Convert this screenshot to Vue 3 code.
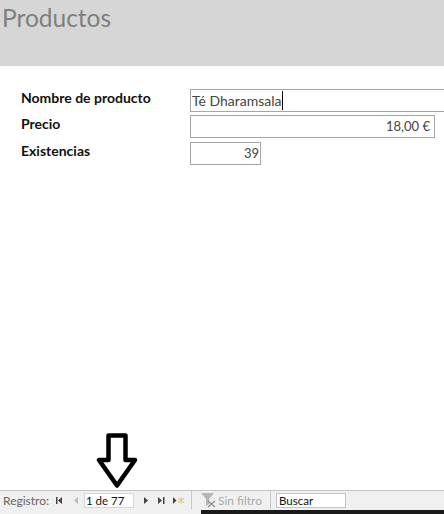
<script setup>
const fields = [
  { label: 'Nombre de producto', value: 'Té Dharamsala', kind: 'name' },
  { label: 'Precio', value: '18,00 €', kind: 'price' },
  { label: 'Existencias', value: '39', kind: 'stock' }
]
</script>

<template>
  <div class="page">
    <header class="head"><h1>Productos</h1></header>
    <main class="form">
      <div v-for="f in fields" :key="f.label" class="row" :class="f.kind">
        <span class="label">{{ f.label }}</span>
        <div class="field">
          <span>{{ f.value }}</span><i v-if="f.kind === 'name'" class="caret"></i>
        </div>
      </div>
    </main>
    <svg class="arrow" width="42" height="58" viewBox="0 0 42 58">
      <path d="M12.500 3.500H29.500V28H39L21 53.500L3 28H12.500Z" fill="#fff" stroke="#000" stroke-width="4.500" stroke-linejoin="round"/>
    </svg>
    <footer class="bar">
      <div class="nav">
        <span class="reg">Registro:</span>
        <svg class="ico first" width="7" height="7" viewBox="0 0 7 7"><path d="M0 0H1.500V7H0ZM6 0V7L2 3.500Z" fill="#444"/></svg>
        <svg class="ico prev" width="4" height="7" viewBox="0 0 4 7"><path d="M4 0V7L0 3.500Z" fill="#bbb"/></svg>
        <div class="current">1 de 77</div>
        <svg class="ico next" width="4" height="7" viewBox="0 0 4 7"><path d="M0 0V7L4 3.500Z" fill="#444"/></svg>
        <svg class="ico last" width="7" height="7" viewBox="0 0 7 7"><path d="M0 0V7L4 3.500ZM5 0H6.500V7H5Z" fill="#444"/></svg>
        <svg class="ico new" width="12" height="9" viewBox="0 0 12 9">
          <path d="M0 1V8L3.500 4.500Z" fill="#444"/>
          <path d="M8 1V8M5 2.500L11 6.500M11 2.500L5 6.500" stroke="#f3c58c" stroke-width="1.300"/>
        </svg>
      </div>
      <div class="filter">
        <svg width="17" height="16" viewBox="0 0 17 16">
          <path d="M1 1H14L9 7V12L6 14V7Z" fill="#b5b5b5"/>
          <path d="M8 9L15 15M15 9L8 15" stroke="#8d8d8d" stroke-width="1.300"/>
        </svg>
        <span>Sin filtro</span>
      </div>
      <div class="search"><div class="box">Buscar</div></div>
      <div class="strip"></div>
    </footer>
  </div>
</template>

<style scoped>
.page {
  position: relative;
  width: 444px;
  height: 514px;
  overflow: hidden;
  display: flex;
  flex-direction: column;
  background: #fff;
  font-family: Lato, "Open Sans", sans-serif;
}
.head {
  height: 66px;
  flex: none;
  background: #d6d6d6;
  padding: 3px 0 0 2px;
  box-sizing: border-box;
}
h1 {
  margin: 0;
  font-size: 24.500px;
  line-height: 30px;
  font-weight: 400;
  color: #7f7f7f;
}
.form {
  flex: 1;
  padding-top: 23px;
  display: flex;
  flex-direction: column;
}
.row {
  display: flex;
  padding-left: 21px;
  height: 23px;
  margin-bottom: 3px;
  font-size: 14px;
}
.label {
  width: 169px;
  flex: none;
  font-weight: 700;
  color: #111;
  line-height: 17px;
}
.field {
  box-sizing: border-box;
  height: 23px;
  border: 1px solid #a6a6a6;
  color: #444;
  font-size: 14px;
  line-height: 19px;
  display: flex;
  align-items: center;
  padding: 0 1px;
}
.name .field { width: 260px; flex: none; }
.price .field { width: 245px; justify-content: flex-end; padding-right: 4px; font-size: 13px; }
.stock { margin-top: 1px; }
.stock .field { width: 71px; justify-content: flex-end; font-size: 13px; }
.caret {
  width: 1px;
  height: 19px;
  background: #000;
}
.arrow {
  position: absolute;
  left: 96px;
  top: 432px;
}
.bar {
  position: relative;
  flex: none;
  box-sizing: border-box;
  height: 24px;
  padding-bottom: 5px;
  border-top: 1px solid #c4c4c4;
  background: #f0f0f0;
  display: flex;
  align-items: center;
  font-size: 12px;
  color: #666;
}
.nav {
  display: flex;
  align-items: center;
  width: 192px;
  padding-left: 3px;
  box-sizing: border-box;
  height: 100%;
  border-right: 1px solid #c8c8c8;
}
.reg { width: 52px; flex: none; }
.ico { flex: none; }
.first { margin-left: 1px; }
.prev { margin-left: 11px; }
.current {
  box-sizing: border-box;
  width: 50px;
  height: 15px;
  margin-left: 6px;
  border: 1px solid #d0d7df;
  background: #fff;
  color: #111;
  font-size: 11.500px;
  line-height: 13px;
  padding-left: 1px;
}
.next { margin-left: 10px; }
.last { margin-left: 10px; }
.new { margin-left: 8px; }
.filter {
  display: flex;
  align-items: center;
  width: 79px;
  box-sizing: border-box;
  padding-left: 8px;
  gap: 1px;
  height: 100%;
  border-right: 1px solid #c8c8c8;
  color: #aaa;
  font-size: 12px;
}
.search { padding-left: 5px; }
.box {
  box-sizing: border-box;
  width: 70px;
  height: 15px;
  border: 1px solid #c4c4c4;
  background: #fff;
  color: #111;
  font-size: 11.500px;
  line-height: 13px;
  padding-left: 2px;
}
.strip {
  position: absolute;
  left: 201px;
  right: 0;
  bottom: 0;
  height: 4px;
  background: #1a1a1a;
}
</style>
